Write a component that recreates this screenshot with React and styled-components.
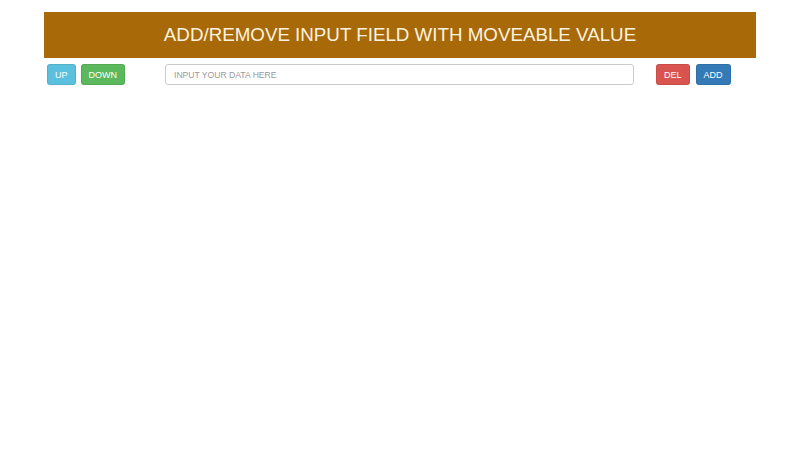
import React, { useState } from 'react';
import styled, { createGlobalStyle } from 'styled-components';

const GlobalStyle = createGlobalStyle`
  body {
    margin: 0;
    background: #fff;
    font-family: "Liberation Sans", Arial, sans-serif;
  }
`;

function App() {
  const [value, setValue] = useState('');

  return (
    <Page>
      <GlobalStyle />
      <Header>
        <Title>ADD/REMOVE INPUT FIELD WITH MOVEABLE VALUE</Title>
      </Header>
      <FieldRow>
        <MoveButtons>
          <Button color="#5bc0de">UP</Button>
          <Button color="#5cb85c">DOWN</Button>
        </MoveButtons>
        <DataInput
          placeholder="INPUT YOUR DATA HERE"
          value={value}
          onChange={(e) => setValue(e.target.value)}
        />
        <EditButtons>
          <Button color="#d9534f">DEL</Button>
          <Button color="#337ab7">ADD</Button>
        </EditButtons>
      </FieldRow>
    </Page>
  );
}

const Page = styled.div`
  width: 712px;
  margin: 12px 0 0 44px;
`;

const Header = styled.div`
  height: 46px;
  background: #a86908;
  display: flex;
  align-items: center;
  justify-content: center;
`;

const Title = styled.h1`
  margin: 0;
  font-size: 18.75px;
  font-weight: normal;
  color: #fdf3e0;
`;

const FieldRow = styled.div`
  display: flex;
  align-items: center;
  margin-top: 6px;
  padding-left: 3px;
`;

const MoveButtons = styled.div`
  display: flex;
  gap: 5px;
  width: 118px;
`;

const EditButtons = styled.div`
  display: flex;
  gap: 6px;
  margin-left: 22px;
`;

const Button = styled.button`
  height: 21px;
  padding: 0 7px;
  border: 1px solid rgba(0, 0, 0, 0.08);
  border-radius: 3px;
  background: ${(p) => p.color};
  color: #fff;
  font-family: "Liberation Sans", Arial, sans-serif;
  font-size: 9px;
  cursor: pointer;
`;

const DataInput = styled.input`
  width: 469px;
  height: 21px;
  box-sizing: border-box;
  padding: 0 8px;
  border: 1px solid #ccc;
  border-radius: 3px;
  font-family: "Liberation Sans", Arial, sans-serif;
  font-size: 8.6px;
  color: #555;
  outline: none;
  &::placeholder {
    color: #999;
  }
`;

export default App;
